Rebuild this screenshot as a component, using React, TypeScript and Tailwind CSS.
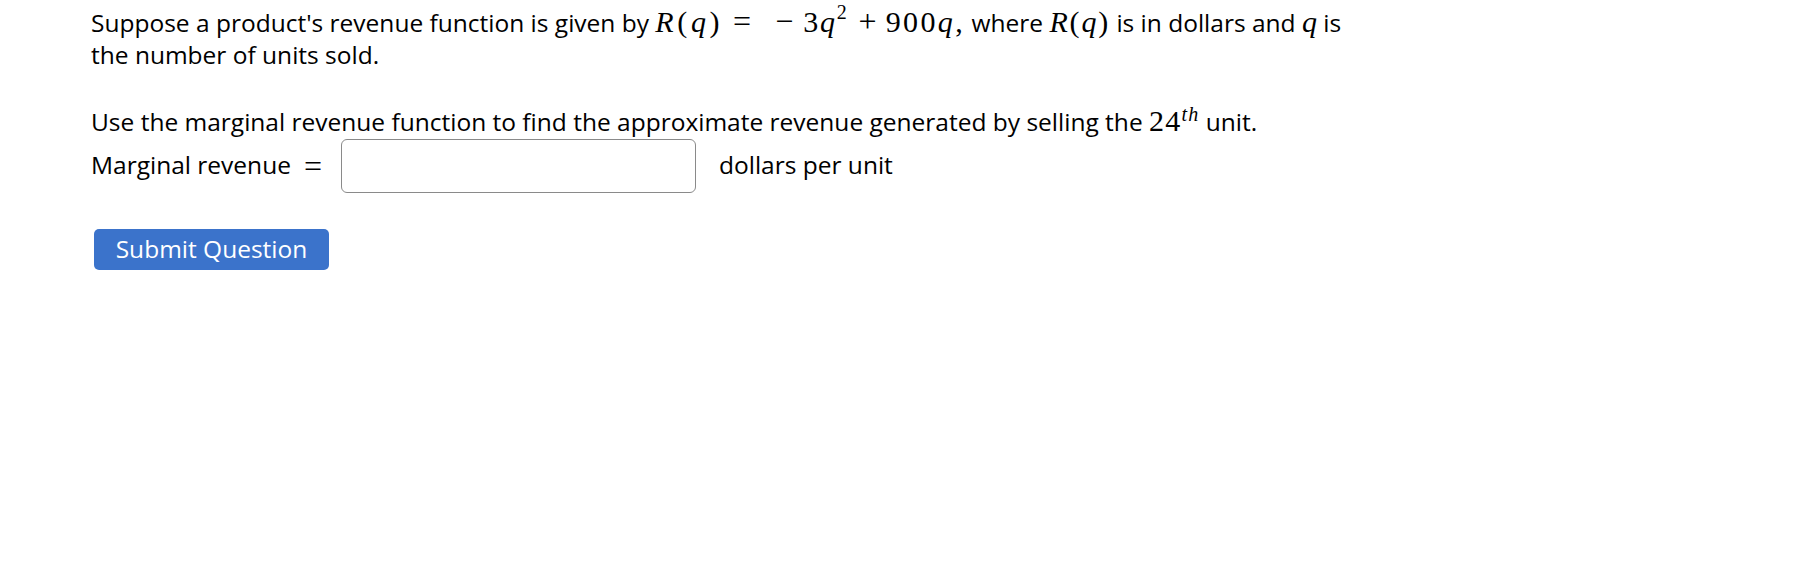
import React from "react";

const serif = { fontFamily: '"Liberation Serif", serif' };

const M = ({ children, className = "" }: { children: React.ReactNode; className?: string }) => (
  <span className={"inline-block text-[30px] leading-none " + className} style={serif}>
    {children}
  </span>
);
const I = ({ children }: { children: React.ReactNode }) => <span className="italic">{children}</span>;

export default function App() {
  return (
    <div className="min-h-[585px] w-[1800px] bg-white text-black" style={{ fontFamily: '"Open Sans", sans-serif' }}>
      <div className="pl-[91px] pt-[5px] text-[24.5px]">
        <p className="leading-[32px]">
          Suppose a product's revenue function is given by{" "}
          <M className="tracking-[0.12em]">
            <I>R</I>(<I>q</I>)
          </M>
          <M className="ml-[10px] text-[32px]">=</M>
          <M className="ml-[24px] text-[32px]">−</M>
          <M className="ml-[10px] tracking-[0.06em]">
            3<I>q</I>
            <sup className="-top-[0.65em] text-[20px] not-italic">2</sup>
          </M>
          <M className="ml-[10px] text-[32px]">+</M>
          <M className="ml-[9px] tracking-[0.08em]">
            900<I>q</I>,
          </M>{" "}
          where{" "}
          <M className="tracking-[0.06em]">
            <I>R</I>(<I>q</I>)
          </M>{" "}
          is in dollars and{" "}
          <M>
            <I>q</I>
          </M>{" "}
          is
          <br />
          the number of units sold.
        </p>
        <p className="mt-[35px] leading-[32px]">
          Use the marginal revenue function to find the approximate revenue generated by selling the{" "}
          <M className="tracking-[0.04em]">
            24<sup className="text-[20px] italic">th</sup>
          </M>{" "}
          unit.
        </p>
        <div className="mt-[1px] flex items-center">
          <span className="relative -top-[1px]">Marginal revenue</span>
          <M className="ml-[13px] text-[32px]">=</M>
          <input
            type="text"
            className="ml-[19px] h-[54px] w-[355px] rounded-[6px] border border-[#8a8a8a] bg-white"
          />
          <span className="relative -top-[1px] ml-[23px]">dollars per unit</span>
        </div>
        <button className="mt-[36px] ml-[3px] h-[41px] w-[235px] rounded-[5px] bg-[#3b73cb] text-[24.5px] text-white">
          Submit Question
        </button>
      </div>
    </div>
  );
}
